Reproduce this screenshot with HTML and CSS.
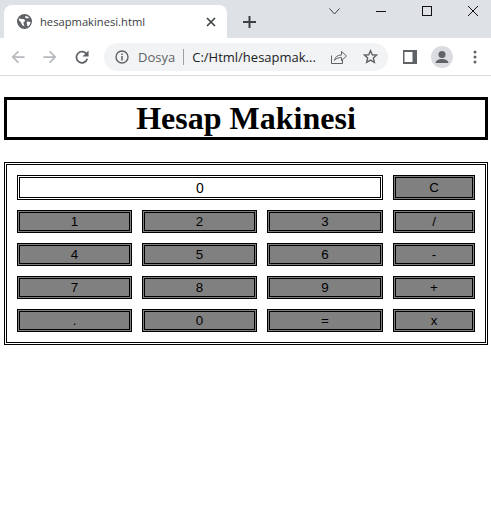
FILE: index.html
```html
<html>
<head>
<title>Hesap Makinesi</title>
<link rel="stylesheet" href="styles.css">
</head>
<body>

<div id="tabstrip">
	<div class="tab">
		<svg class="favicon" width="15" height="15" viewBox="0 0 16 16"><circle cx="8" cy="8" r="8" fill="#5f6368"/><path d="M2.500 4.500c1.500 1 3.500 .5 5 1 1 .5 1.500 1.500 .5 2.500-.8 .7-1.500 1-1 2 .5 1 .5 2 1 3-2-.5-3-2-3.500-3.500C4 8.500 2.500 7.500 2 6.500zM9 2c1.500 0 3 .8 4 2l-2.500 .8L8.500 3.500zM10.500 8l4 .5c-.3 2-1.500 4-3 4.800-.8-1-.5-2.300-1-3.300z" fill="#fff"/></svg>
		<span class="tab-title">hesapmakinesi.html</span>
		<svg class="tab-close" width="10" height="10" viewBox="0 0 10 10"><path d="M1 1l8 8M9 1l-8 8" stroke="#3c4043" stroke-width="1.600"/></svg>
	</div>
	<svg class="newtab" width="13" height="14" viewBox="0 0 13 14"><path d="M6.500 1v12M0 7h13" stroke="#3c4043" stroke-width="2"/></svg>
	<div class="winctl">
		<svg width="11" height="7" viewBox="0 0 11 7"><path d="M.5 .5l5 5.500 5-5.500" fill="none" stroke="#3c4043"/></svg>
		<svg width="10" height="10" viewBox="0 0 10 10"><path d="M0 5.500h10" stroke="#111"/></svg>
		<svg width="10" height="10" viewBox="0 0 10 10"><rect x=".5" y=".5" width="9" height="9" fill="none" stroke="#111"/></svg>
		<svg width="10" height="10" viewBox="0 0 10 10"><path d="M0 0l10 10M10 0L0 10" stroke="#111"/></svg>
	</div>
</div>

<div id="toolbar">
	<svg class="navicon" width="14" height="14" viewBox="0 0 16 16"><path d="M15.500 8H2M8.500 1.500L2 8l6.500 6.500" fill="none" stroke="#b6b9bd" stroke-width="2"/></svg>
	<svg class="navicon" width="14" height="14" viewBox="0 0 16 16"><path d="M.5 8H14M7.500 1.500L14 8l-6.500 6.500" fill="none" stroke="#b6b9bd" stroke-width="2"/></svg>
	<svg class="navicon" width="14" height="14" viewBox="0 0 16 16"><path d="M14 10a6.300 6.300 0 1 1-.8-5.200" fill="none" stroke="#5f6368" stroke-width="2"/><path d="M15.500 .5v7h-7z" fill="#5f6368"/></svg>
	<div id="omnibox">
		<svg width="14" height="14" viewBox="0 0 14 14"><circle cx="7" cy="7" r="6" fill="none" stroke="#5f6368" stroke-width="1.400"/><path d="M7 6v4.500M7 3.500v1.500" stroke="#5f6368" stroke-width="1.500"/></svg>
		<span class="scheme">Dosya</span>
		<span class="sep"></span>
		<span class="url">C:/Html/hesapmak...</span>
		<svg class="omni-share" width="16" height="14" viewBox="0 0 16 14"><path d="M.5 5.500v8h11V10M3.500 10.500c.5-3.500 3-5.500 7-5.500V1.500l5 4.500-5 4.500V7.500c-3 0-5.500 1-7 3z" fill="none" stroke="#5f6368"/></svg>
		<svg class="omni-star" width="15" height="15" viewBox="0 0 16 16"><path d="M8 1.800l1.900 4.300 4.600 .4-3.500 3.100 1.100 4.600L8 11.800l-4.100 2.400L5 9.600 1.500 6.500l4.600-.4z" fill="none" stroke="#5f6368" stroke-width="1.500"/></svg>
	</div>
	<svg class="sidepanel" width="14" height="14" viewBox="0 0 14 14"><path d="M0 0h14v14H0z" fill="#5f6368"/><path d="M1.500 2h8v10h-8z" fill="#fff"/></svg>
	<svg class="avatar" width="22" height="22" viewBox="0 0 22 22"><circle cx="11" cy="11" r="11" fill="#dadce0"/><circle cx="11" cy="8.500" r="3.500" fill="#5f6368"/><path d="M4.500 17c.5-3 3.500-4 6.500-4s6 1 6.500 4z" fill="#5f6368"/></svg>
	<svg class="menu" width="4" height="14" viewBox="0 0 4 14"><circle cx="2" cy="2" r="1.500" fill="#5f6368"/><circle cx="2" cy="7" r="1.500" fill="#5f6368"/><circle cx="2" cy="12" r="1.500" fill="#5f6368"/></svg>
</div>

<div id="page">
	<h1 class="title">Hesap Makinesi</h1>
	<div class="calc">
		<input class="display" type="text" value="0">
		<button>C</button>
		<button>1</button>
		<button>2</button>
		<button>3</button>
		<button>/</button>
		<button>4</button>
		<button>5</button>
		<button>6</button>
		<button>-</button>
		<button>7</button>
		<button>8</button>
		<button>9</button>
		<button>+</button>
		<button>.</button>
		<button>0</button>
		<button>=</button>
		<button>x</button>
	</div>
</div>

</body>
</html>
```

FILE: styles.css
```css
html, body {
	margin: 0px;
	padding: 0px;
	background-color: #ffffff;
	font-family: "Liberation Sans", sans-serif;
}
svg {
	display: block;
	flex: none;
}

/* browser tabs */
#tabstrip {
	height: 38px;
	background-color: #dee1e6;
	display: flex;
	align-items: flex-end;
	box-sizing: border-box;
	padding-left: 4px;
}
.tab {
	width: 223px;
	height: 33px;
	background-color: #ffffff;
	border-radius: 8px 8px 0 0;
	display: flex;
	align-items: center;
	box-sizing: border-box;
	padding: 0 11px 0 13px;
}
.tab-title {
	font-family: "Open Sans", sans-serif;
	font-size: 11.200px;
	color: #3c4043;
	margin-left: 8px;
	flex: 1;
}
.newtab {
	margin: 0 0 9px 16px;
}
.winctl {
	margin-left: auto;
	align-self: flex-start;
	display: flex;
	align-items: center;
	gap: 36px;
	padding: 6px 13px 0 0;
}

/* address bar */
#toolbar {
	height: 37px;
	border-bottom: 1px solid #dadce0;
	display: flex;
	align-items: center;
	padding-left: 11px;
}
.navicon {
	margin-right: 18px;
}
#omnibox {
	width: 284px;
	height: 28px;
	box-sizing: border-box;
	margin-left: -3px;
	padding-left: 11px;
	background-color: #f1f3f4;
	border-radius: 14px;
	display: flex;
	align-items: center;
	font-family: "Open Sans", sans-serif;
	font-size: 13px;
}
.scheme {
	color: #5f6368;
	margin-left: 9px;
}
.sep {
	width: 1px;
	height: 16px;
	background-color: #9aa0a6;
	margin: 0 8px;
}
.url {
	color: #202124;
	flex: 1;
	white-space: nowrap;
}
.omni-star {
	margin: 0 10px 0 16px;
}
.sidepanel {
	margin-left: 15px;
}
.avatar {
	margin-left: 14px;
}
.menu {
	margin-left: 20px;
}

/* calculator page */
#page {
	padding: 21px 3px 0 4px;
}
.title {
	margin: 0;
	border: 3px solid #000000;
	height: 43px;
	box-sizing: border-box;
	text-align: center;
	font-family: "Liberation Serif", serif;
	font-size: 32px;
	line-height: 37px;
	font-weight: bold;
	color: #000000;
}
.calc {
	margin-top: 22px;
	height: 183px;
	box-sizing: border-box;
	border: 3px double #000000;
	padding: 10px 10px 10px 10px;
	display: grid;
	grid-template-columns: 115px 115px 116px 82px;
	grid-template-rows: 25px 23px 23px 23px 23px;
	column-gap: 10px;
	row-gap: 10px;
}
.display {
	grid-column: 1 / span 3;
	border: 3px double #000000;
	padding: 0;
	margin: 0;
	min-width: 0;
	text-align: center;
	font-family: "Liberation Sans", sans-serif;
	font-size: 14px;
	color: #000000;
	outline: none;
}
button {
	border: 3px double #000000;
	background-color: #808080;
	padding: 0;
	margin: 0;
	font-family: "Liberation Sans", sans-serif;
	font-size: 13.330px;
	color: #000000;
}
```
